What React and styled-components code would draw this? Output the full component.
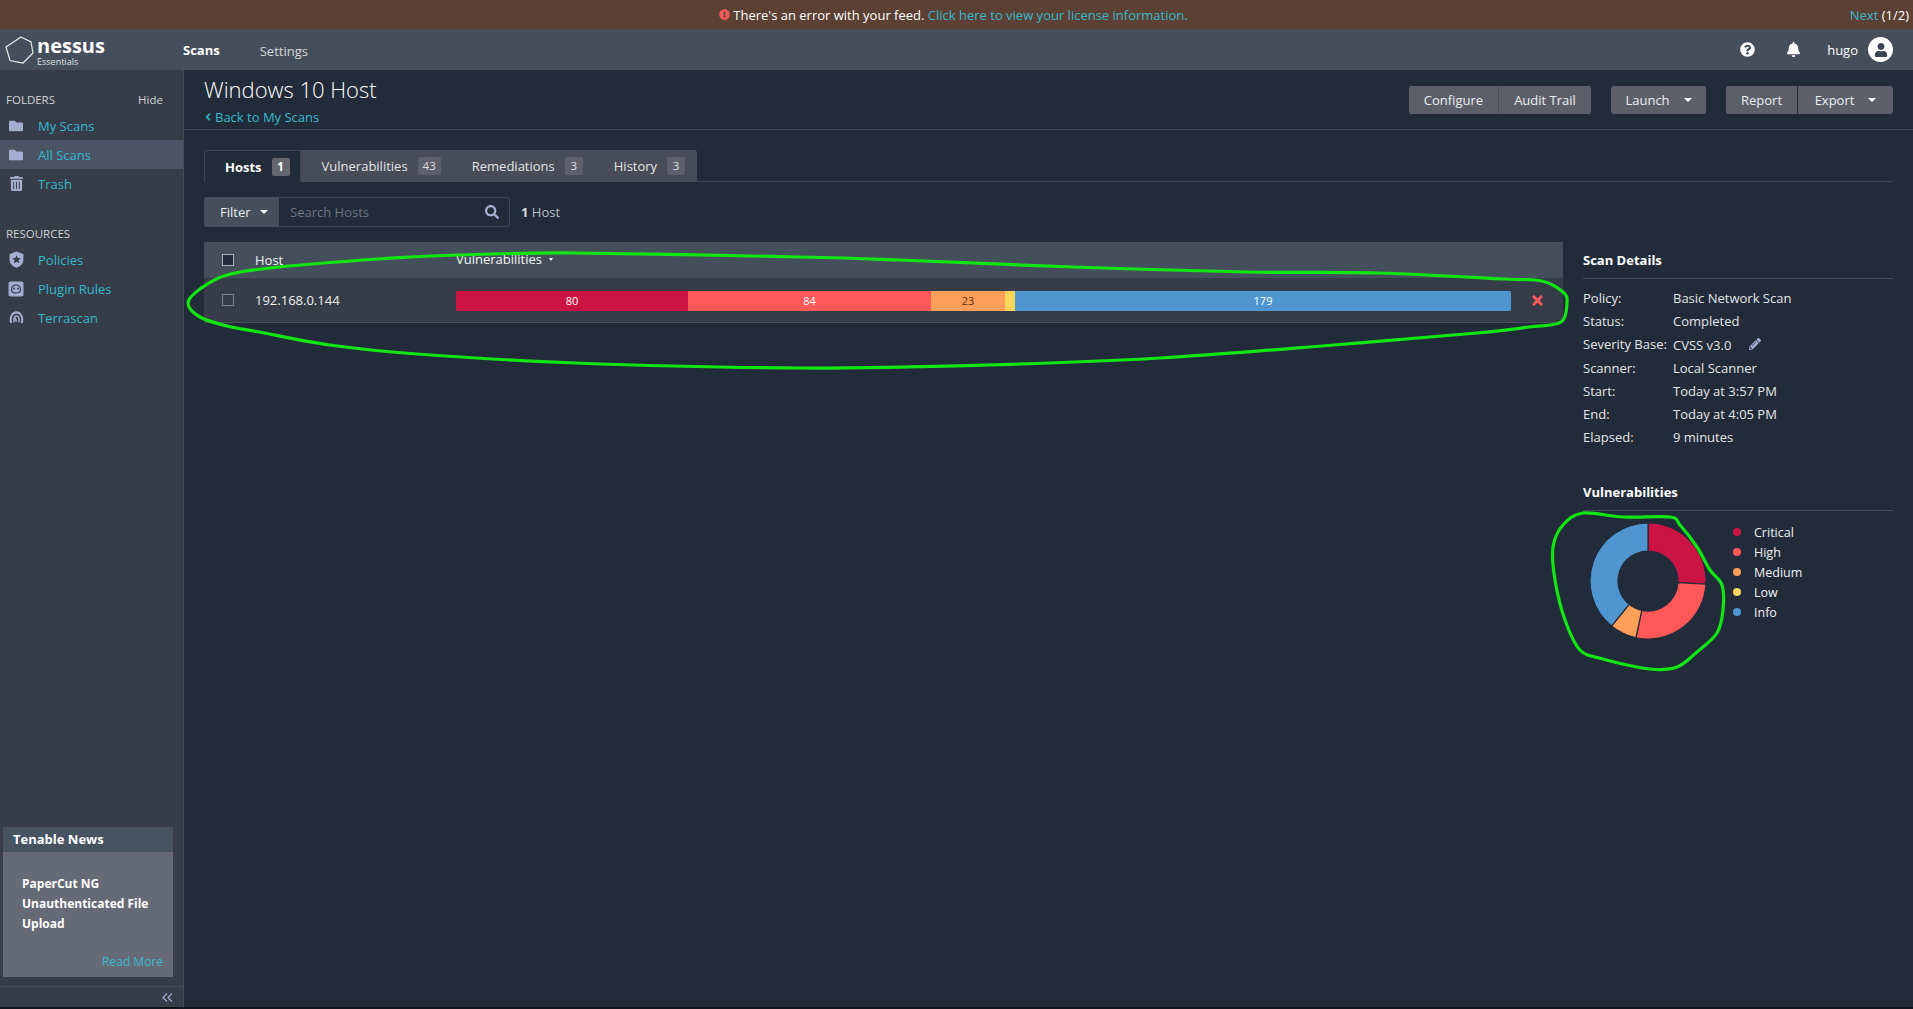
import React from "react";
import styled, { createGlobalStyle } from "styled-components";
import {
  FaBell,
  FaChevronLeft,
  FaExclamationCircle,
  FaFolder,
  FaPencilAlt,
  FaQuestionCircle,
  FaSearch,
  FaTimes,
  FaTrashAlt,
  FaUser,
} from "react-icons/fa";

const GlobalStyle = createGlobalStyle`
  html, body { margin: 0; padding: 0; background: #222b3a; }
  body {
    font-family: "Open Sans", "Liberation Sans", sans-serif;
    font-size: 13px;
    color: #e8eaec;
  }
  * { box-sizing: border-box; }
`;

const Page = styled.div`
  position: relative;
  width: 1913px;
  height: 1009px;
  overflow: hidden;
  display: flex;
  flex-direction: column;
  border-bottom: 2px solid #12161c;
`;

const Link = styled.a`
  color: #35b9cd;
  text-decoration: none;
`;

const Banner = styled.div`
  position: relative;
  height: 29px;
  flex: none;
  background: #5c4033;
  display: flex;
  align-items: center;
  justify-content: center;
  padding-right: 6px;
  font-size: 13px;
  color: #fff;
  svg { color: #f25c5c; font-size: 11px; margin-right: 3px; }
`;

const BannerPager = styled.span`
  position: absolute;
  right: 4px;
  top: 6px;
`;

const Header = styled.header`
  height: 41px;
  flex: none;
  background: #454f5b;
  display: flex;
  align-items: center;
  padding: 0 20px 0 5px;
`;

const Brand = styled.div`
  width: 178px;
  display: flex;
  align-items: center;
  gap: 3px;
`;

const BrandText = styled.div`
  display: flex;
  flex-direction: column;
  padding-top: 3px;
  color: #fff;
`;

const BrandName = styled.span`
  font-size: 20px;
  font-weight: 700;
  line-height: 20px;
`;

const BrandEdition = styled.span`
  font-size: 9px;
  line-height: 11px;
  color: #dfe2e5;
`;

const NavItem = styled.a`
  margin-right: 40px;
  margin-top: ${(p) => (p.$active ? 0 : 2)}px;
  color: ${(p) => (p.$active ? "#fff" : "#d5d8db")};
  font-weight: ${(p) => (p.$active ? 700 : 400)};
  font-size: 13px;
`;

const UserArea = styled.div`
  margin-left: auto;
  display: flex;
  align-items: center;
  color: #fff;
  font-size: 13px;
`;

const HeaderIcon = styled.span`
  display: flex;
  margin-right: ${(p) => p.$gap}px;
  font-size: 15px;
`;

const Avatar = styled.span`
  width: 25px;
  height: 25px;
  margin-left: 10px;
  border-radius: 50%;
  background: #fff;
  color: #3a4452;
  display: flex;
  align-items: center;
  justify-content: center;
  font-size: 14px;
`;

const Body = styled.div`
  flex: 1;
  min-height: 0;
  display: flex;
`;

const Sidebar = styled.aside`
  width: 184px;
  flex: none;
  background: #363c48;
  border-right: 1px solid #454b57;
  display: flex;
  flex-direction: column;
`;

const SideLabel = styled.div`
  display: flex;
  justify-content: space-between;
  padding: 0 20px 0 6px;
  margin: ${(p) => p.$top}px 0 2px;
  line-height: 18px;
  font-size: 11.5px;
  color: #cfd2d6;
`;

const SideItem = styled.a`
  height: 29px;
  display: flex;
  align-items: center;
  gap: 14px;
  padding-left: 8px;
  color: #35b9cd;
  background: ${(p) => (p.$active ? "#4a5464" : "transparent")};
`;

const SideIcon = styled.span`
  width: 16px;
  display: flex;
  justify-content: center;
  flex: none;
  color: #a3aed0;
  svg { width: ${(p) => p.$size}px; height: ${(p) => p.$size}px; flex: none; }
`;

const News = styled.section`
  margin: auto 10px 9px 3px;
  width: 170px;
`;

const NewsHead = styled.div`
  height: 25px;
  padding-left: 10px;
  background: #485362;
  color: #fff;
  font-weight: 700;
  line-height: 25px;
`;

const NewsBody = styled.div`
  height: 125px;
  background: #666a76;
  padding: 22px 10px 7px 19px;
  display: flex;
  flex-direction: column;
`;

const NewsTitle = styled.div`
  color: #fff;
  font-weight: 700;
  font-size: 12px;
  line-height: 20px;
`;

const NewsMore = styled(Link)`
  margin-top: auto;
  align-self: flex-end;
  font-size: 12px;
`;

const SideFoot = styled.div`
  height: 21px;
  border-top: 1px solid #454b57;
  display: flex;
  align-items: center;
  justify-content: flex-end;
  padding-right: 10px;
  color: #a3aed0;
`;

const Main = styled.main`
  flex: 1;
  min-width: 0;
  display: flex;
  flex-direction: column;
`;

const PageHead = styled.div`
  height: 60px;
  flex: none;
  display: flex;
  justify-content: space-between;
  padding: 3px 20px 0 20px;
  border-bottom: 1px solid #3e4552;
`;

const Title = styled.h1`
  margin: 0;
  font-size: 22px;
  font-weight: 300;
  line-height: 32px;
  color: #fff;
`;

const BackLink = styled(Link)`
  display: flex;
  align-items: center;
  gap: 3px;
  margin-top: 3px;
  line-height: 18px;
  svg { font-size: 8px; stroke: currentColor; stroke-width: 40px; }
`;

const Actions = styled.div`
  display: flex;
  align-items: flex-start;
  padding-top: 13px;
`;

const ActionButton = styled.button`
  height: 28px;
  width: ${(p) => p.$w}px;
  margin-left: ${(p) => p.$ml || 0}px;
  padding: 0;
  border: 0;
  border-radius: ${(p) => p.$radius || "3px"};
  background: #5c5f6a;
  color: #eceef0;
  font: 400 13px "Open Sans", sans-serif;
  display: flex;
  align-items: center;
  justify-content: center;
  gap: 14px;
`;

const Caret = styled.span`
  width: 0;
  height: 0;
  border-left: ${(p) => (p.$small ? 2.5 : 4.5)}px solid transparent;
  border-right: ${(p) => (p.$small ? 2.5 : 4.5)}px solid transparent;
  border-top: ${(p) => (p.$small ? 3 : 4)}px solid #fff;
`;

const Content = styled.div`
  padding: 20px 20px 0;
`;

const Tabs = styled.div`
  height: 32px;
  display: flex;
  border-bottom: 1px solid #3e4552;
`;

const Tab = styled.div`
  height: 32px;
  display: flex;
  align-items: center;
  gap: 10px;
  padding: 0 ${(p) => (p.$last ? 12 : 10)}px 0 ${(p) => (p.$active ? 20 : 21)}px;
  background: ${(p) => (p.$active ? "#222b3a" : "#484c58")};
  color: ${(p) => (p.$active ? "#fff" : "#e2e4e7")};
  font-weight: ${(p) => (p.$active ? 700 : 400)};
  border: ${(p) => (p.$active ? "1px solid #3e4552" : "0")};
  border-bottom: 0;
  border-radius: ${(p) => (p.$active ? "3px 0 0 0" : p.$last ? "0 3px 0 0" : "0")};
`;

const TabBadge = styled.span`
  min-width: 18px;
  height: 18px;
  padding: 0 5px;
  border-radius: 2px;
  background: ${(p) => (p.$active ? "#666670" : "#5d606c")};
  color: ${(p) => (p.$active ? "#fff" : "#dcdee1")};
  font-size: 11.5px;
  font-weight: ${(p) => (p.$active ? 700 : 400)};
  line-height: 18px;
  text-align: center;
`;

const FilterRow = styled.div`
  display: flex;
  align-items: center;
  margin: 15px 0;
`;

const FilterButton = styled.div`
  width: 75px;
  height: 30px;
  display: flex;
  align-items: center;
  gap: 9px;
  padding-left: 16px;
  background: #454f5b;
  color: #eceef0;
  border-radius: 3px 0 0 3px;
`;

const SearchBox = styled.div`
  width: 231px;
  height: 30px;
  display: flex;
  align-items: center;
  justify-content: space-between;
  padding: 0 10px 0 11px;
  border: 1px solid #3e4552;
  border-left: 0;
  border-radius: 0 3px 3px 0;
  color: #6f7682;
  svg { color: #a3aed0; font-size: 14px; }
`;

const HostCount = styled.span`
  margin-left: 11px;
  color: #b8bcc3;
  b { color: #d5d8db; }
`;

const Columns = styled.div`
  display: grid;
  grid-template-columns: 1359px 310px;
  gap: 20px;
`;

const HostRow = styled.div`
  display: flex;
  align-items: center;
  height: ${(p) => (p.$head ? 36 : 45)}px;
  padding-left: 18px;
  background: ${(p) => (p.$head ? "#454f5b" : "#363c48")};
  border-bottom: ${(p) => (p.$head ? "0" : "1px solid #4a505c")};
  color: #f2f3f4;
`;

const Check = styled.span`
  width: 12px;
  height: 12px;
  flex: none;
  margin-right: 21px;
  border: 1px solid ${(p) => (p.$head ? "#aab0b8" : "#7f8591")};
  background: ${(p) => (p.$head ? "#222b3a" : "transparent")};
`;

const HostName = styled.span`
  width: 201px;
  flex: none;
`;

const SortLabel = styled.span`
  display: flex;
  align-items: center;
  gap: 7px;
  margin-top: -2px;
`;

const Bar = styled.div`
  display: flex;
  width: 1055px;
  height: 20px;
  margin-top: 1px;
  border-radius: 2px;
  overflow: hidden;
`;

const BarPart = styled.span`
  background: ${(p) => p.$bg};
  color: ${(p) => p.$color || "#fff"};
  font-size: 11px;
  line-height: 20px;
  text-align: center;
`;

const RemoveIcon = styled.span`
  display: flex;
  margin-left: 19px;
  color: #ff5b5b;
  font-size: 15px;
`;

const Panel = styled.aside`
  padding-top: 9px;
`;

const PanelTitle = styled.h3`
  margin: ${(p) => p.$top || 0}px 0 0;
  padding-bottom: 9px;
  border-bottom: 1px solid #454b57;
  font-size: 13px;
  font-weight: 700;
  line-height: 18px;
  color: #fff;
`;

const DetailList = styled.div`
  margin-top: 8px;
`;

const DetailRow = styled.div`
  display: grid;
  grid-template-columns: 90px 1fr;
  height: ${(p) => (p.$tall ? 24 : 23)}px;
  line-height: 23px;
  color: #e4e6e8;
`;

const DetailValue = styled.span`
  display: flex;
  align-items: center;
  gap: 18px;
  svg { color: #a3aed0; font-size: 12px; margin-top: -2px; }
`;

const ChartRow = styled.div`
  display: flex;
  margin-top: 10px;
  padding-left: 5px;
`;

const Legend = styled.div`
  margin: 1px 0 0 25px;
`;

const LegendRow = styled.div`
  height: 20px;
  display: flex;
  align-items: center;
  gap: 13px;
  font-size: 12.5px;
  color: #f0f1f3;
`;

const LegendDot = styled.span`
  width: 8px;
  height: 8px;
  border-radius: 50%;
  background: ${(p) => p.$color};
`;

const Scribbles = styled.svg`
  position: absolute;
  left: 0;
  top: 0;
  pointer-events: none;
`;

const COLORS = {
  critical: "#cc1444",
  high: "#ff5858",
  medium: "#ff9f59",
  low: "#ffd65c",
  info: "#4f95cf",
};

const details = [
  ["Policy:", "Basic Network Scan"],
  ["Status:", "Completed"],
  ["Severity Base:", "CVSS v3.0", true],
  ["Scanner:", "Local Scanner"],
  ["Start:", "Today at 3:57 PM"],
  ["End:", "Today at 4:05 PM"],
  ["Elapsed:", "9 minutes"],
];

const legend = [
  ["Critical", COLORS.critical],
  ["High", COLORS.high],
  ["Medium", COLORS.medium],
  ["Low", COLORS.low],
  ["Info", COLORS.info],
];

// start and end in degrees, clockwise from 12 o'clock
const slices = [
  [0, 93, COLORS.critical],
  [93, 192, COLORS.high],
  [192, 219, COLORS.medium],
  [219, 360, COLORS.info],
];

const polar = (r, deg) => {
  const a = ((deg - 90) * Math.PI) / 180;
  return [60 + r * Math.cos(a), 60 + r * Math.sin(a)];
};

const slicePath = (from, to) => {
  const [x1, y1] = polar(58, from);
  const [x2, y2] = polar(58, to);
  const [x3, y3] = polar(30, to);
  const [x4, y4] = polar(30, from);
  const large = to - from > 180 ? 1 : 0;
  return `M${x1} ${y1}A58 58 0 ${large} 1 ${x2} ${y2}L${x3} ${y3}A30 30 0 ${large} 0 ${x4} ${y4}Z`;
};

// closed catmull-rom curve through the hand drawn points
const smooth = (pts) => {
  const n = pts.length;
  let d = `M${pts[0][0]} ${pts[0][1]}`;
  for (let i = 0; i < n; i++) {
    const p0 = pts[(i - 1 + n) % n];
    const p1 = pts[i];
    const p2 = pts[(i + 1) % n];
    const p3 = pts[(i + 2) % n];
    const c1x = p1[0] + (p2[0] - p0[0]) / 6;
    const c1y = p1[1] + (p2[1] - p0[1]) / 6;
    const c2x = p2[0] - (p3[0] - p1[0]) / 6;
    const c2y = p2[1] - (p3[1] - p1[1]) / 6;
    d += `C${c1x} ${c1y} ${c2x} ${c2y} ${p2[0]} ${p2[1]}`;
  }
  return d;
};

const hostLoop = [
  [188, 303], [200, 289], [227, 275], [279, 267], [378, 259], [457, 255], [575, 253], [800, 257],
  [900, 260], [1073, 267], [1247, 272], [1377, 273], [1505, 279], [1542, 281], [1563, 292],
  [1567, 302], [1561, 322], [1529, 327], [1477, 333], [1334, 345], [1160, 358], [987, 365],
  [800, 368], [575, 363], [417, 354], [330, 345], [259, 332], [227, 326], [200, 317],
];

const chartLoop = [
  [1580, 650], [1603, 659], [1650, 669], [1677, 667], [1697, 652], [1717, 633], [1723, 610],
  [1722, 585], [1710, 570], [1697, 547], [1680, 525], [1670, 517], [1623, 517], [1583, 513],
  [1563, 525], [1553, 547], [1555, 580], [1565, 620],
];

const ShieldIcon = () => (
  <svg viewBox="0 0 16 16" fill="currentColor">
    <path d="M8 0.5L14.5 2.8V8.5C14.5 12 11.5 14.6 8 15.7C4.5 14.6 1.5 12 1.5 8.5V2.8Z" />
    <path fill="#363c48" d="M8 4L9.2 6.6L12 6.9L9.9 8.8L10.5 11.6L8 10.2L5.5 11.6L6.1 8.8L4 6.9L6.8 6.6Z" />
  </svg>
);

const PluginIcon = () => (
  <svg viewBox="0 0 16 16" fill="currentColor">
    <rect x="0.5" y="0.5" width="15" height="15" rx="2" />
    <path fill="none" stroke="#363c48" strokeWidth="1.1" d="M3.5 9C3.5 5.5 5.5 4 8 4S12.5 5.5 12.5 9C12.5 11 11 12 8 12S3.5 11 3.5 9Z" />
    <circle cx="6" cy="7.5" r="0.9" fill="#363c48" />
    <circle cx="10" cy="7.5" r="0.9" fill="#363c48" />
  </svg>
);

const GaugeIcon = () => (
  <svg viewBox="0 0 16 16" fill="none" stroke="currentColor">
    <path strokeWidth="2.2" d="M2.5 14C0.5 8 3.5 2.500 8 2.500S15.500 8 13.500 14" />
    <path strokeWidth="1.6" d="M5.500 13C4.500 9.500 5.800 6.500 8 6.500S11.500 9.500 10.500 13" />
    <path strokeWidth="1.8" d="M8 12.500L6.200 8" />
  </svg>
);

const Logo = () => (
  <svg width="29" height="28" viewBox="0 0 29 28" fill="none" stroke="#e8eaec" strokeWidth="1.2">
    <path d="M16 1L26 6L28 17L18 27L5 24.500L1 11Z" />
  </svg>
);

const ChevronsLeft = () => (
  <svg width="11" height="9" viewBox="0 0 11 9" fill="none" stroke="currentColor" strokeWidth="1.2">
    <path d="M5 0.500L1 4.500L5 8.500M10 0.500L6 4.500L10 8.500" />
  </svg>
);

const TopBanner = () => (
  <Banner>
    <FaExclamationCircle />
    There's an error with your feed.&nbsp;
    <Link>Click here to view your license information.</Link>
    <BannerPager>
      <Link>Next</Link> (1/2)
    </BannerPager>
  </Banner>
);

const TopHeader = () => (
  <Header>
    <Brand>
      <Logo />
      <BrandText>
        <BrandName>nessus</BrandName>
        <BrandEdition>Essentials</BrandEdition>
      </BrandText>
    </Brand>
    <NavItem $active>Scans</NavItem>
    <NavItem>Settings</NavItem>
    <UserArea>
      <HeaderIcon $gap={31}><FaQuestionCircle /></HeaderIcon>
      <HeaderIcon $gap={26}><FaBell /></HeaderIcon>
      hugo
      <Avatar><FaUser /></Avatar>
    </UserArea>
  </Header>
);

const SideNav = () => (
  <Sidebar>
    <SideLabel $top={21}>FOLDERS<span>Hide</span></SideLabel>
    <SideItem><SideIcon $size={14}><FaFolder /></SideIcon>My Scans</SideItem>
    <SideItem $active><SideIcon $size={14}><FaFolder /></SideIcon>All Scans</SideItem>
    <SideItem><SideIcon $size={15}><FaTrashAlt /></SideIcon>Trash</SideItem>
    <SideLabel $top={27}>RESOURCES</SideLabel>
    <SideItem><SideIcon $size={17}><ShieldIcon /></SideIcon>Policies</SideItem>
    <SideItem><SideIcon $size={16}><PluginIcon /></SideIcon>Plugin Rules</SideItem>
    <SideItem><SideIcon $size={15}><GaugeIcon /></SideIcon>Terrascan</SideItem>
    <News>
      <NewsHead>Tenable News</NewsHead>
      <NewsBody>
        <NewsTitle>PaperCut NG Unauthenticated File Upload</NewsTitle>
        <NewsMore>Read More</NewsMore>
      </NewsBody>
    </News>
    <SideFoot><ChevronsLeft /></SideFoot>
  </Sidebar>
);

const HostTable = () => (
  <div>
    <HostRow $head>
      <Check $head />
      <HostName>Host</HostName>
      <SortLabel>Vulnerabilities <Caret $small /></SortLabel>
    </HostRow>
    <HostRow>
      <Check />
      <HostName>192.168.0.144</HostName>
      <Bar>
        <BarPart $bg={COLORS.critical} style={{ width: 232 }}>80</BarPart>
        <BarPart $bg={COLORS.high} style={{ width: 243 }}>84</BarPart>
        <BarPart $bg={COLORS.medium} $color="#5c2d10" style={{ width: 74 }}>23</BarPart>
        <BarPart $bg={COLORS.low} style={{ width: 10 }} />
        <BarPart $bg={COLORS.info} style={{ width: 496 }}>179</BarPart>
      </Bar>
      <RemoveIcon><FaTimes /></RemoveIcon>
    </HostRow>
  </div>
);

const DetailsPanel = () => (
  <Panel>
    <PanelTitle>Scan Details</PanelTitle>
    <DetailList>
      {details.map(([label, value, editable]) => (
        <DetailRow key={label} $tall={editable}>
          <span>{label}</span>
          <DetailValue>{value}{editable && <FaPencilAlt />}</DetailValue>
        </DetailRow>
      ))}
    </DetailList>
    <PanelTitle $top={34}>Vulnerabilities</PanelTitle>
    <ChartRow>
      <svg width="120" height="120" viewBox="0 0 120 120">
        {slices.map(([from, to, color]) => (
          <path key={color} d={slicePath(from, to)} fill={color} stroke="#222b3a" strokeWidth="1.2" />
        ))}
      </svg>
      <Legend>
        {legend.map(([name, color]) => (
          <LegendRow key={name}><LegendDot $color={color} />{name}</LegendRow>
        ))}
      </Legend>
    </ChartRow>
  </Panel>
);

export default function App() {
  return (
    <Page>
      <GlobalStyle />
      <TopBanner />
      <TopHeader />
      <Body>
        <SideNav />
        <Main>
          <PageHead>
            <div>
              <Title>Windows 10 Host</Title>
              <BackLink><FaChevronLeft />Back to My Scans</BackLink>
            </div>
            <Actions>
              <ActionButton $w={89} $radius="3px 0 0 3px">Configure</ActionButton>
              <ActionButton $w={93} $radius="0 3px 3px 0" style={{ borderLeft: "1px solid #4a4d57" }}>Audit Trail</ActionButton>
              <ActionButton $w={95} $ml={20}>Launch <Caret /></ActionButton>
              <ActionButton $w={71} $ml={20} $radius="3px 0 0 3px">Report</ActionButton>
              <ActionButton $w={95} $ml={1} $radius="0 3px 3px 0">Export <Caret /></ActionButton>
            </Actions>
          </PageHead>
          <Content>
            <Tabs>
              <Tab $active>Hosts <TabBadge $active>1</TabBadge></Tab>
              <Tab>Vulnerabilities <TabBadge>43</TabBadge></Tab>
              <Tab>Remediations <TabBadge>3</TabBadge></Tab>
              <Tab $last>History <TabBadge>3</TabBadge></Tab>
            </Tabs>
            <FilterRow>
              <FilterButton>Filter <Caret /></FilterButton>
              <SearchBox>Search Hosts<FaSearch /></SearchBox>
              <HostCount><b>1</b> Host</HostCount>
            </FilterRow>
            <Columns>
              <HostTable />
              <DetailsPanel />
            </Columns>
          </Content>
        </Main>
      </Body>
      <Scribbles width="1913" height="1009" viewBox="0 0 1913 1009" fill="none" stroke="#12e612" strokeWidth="3.2">
        <path d={smooth(hostLoop)} />
        <path d={smooth(chartLoop)} />
      </Scribbles>
    </Page>
  );
}
